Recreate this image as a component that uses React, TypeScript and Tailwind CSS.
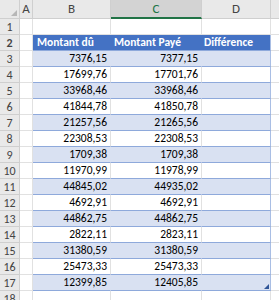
import React from "react";

const rows: [string, string][] = [
  ["7376,15", "7377,15"],
  ["17699,76", "17701,76"],
  ["33968,46", "33968,46"],
  ["41844,78", "41850,78"],
  ["21257,56", "21265,56"],
  ["22308,53", "22308,53"],
  ["1709,38", "1709,38"],
  ["11970,99", "11978,99"],
  ["44845,02", "44935,02"],
  ["4692,91", "4692,91"],
  ["44862,75", "44862,75"],
  ["2822,11", "2823,11"],
  ["31380,59", "31380,59"],
  ["25473,33", "25473,33"],
  ["12399,85", "12405,85"],
];

const font = { fontFamily: "Carlito, Calibri, Lato, 'Liberation Sans', sans-serif" };

function RowHead({ n }: { n: number }) {
  return (
    <div className="w-[20px] h-full shrink-0 bg-[#e9e9e9] border-r border-b border-[#cfcfcf] flex items-center justify-center text-[12px] leading-none text-[#444]">
      {n}
    </div>
  );
}

function App() {
  return (
    <div className="w-[279px] h-[300px] overflow-hidden bg-white select-none" style={font}>
      {/* column headers */}
      <div className="flex h-[19px]">
        <div className="relative w-[20px] shrink-0 bg-[#e9e9e9] border-r border-b border-[#cfcfcf]">
          <svg className="absolute right-[2px] bottom-[2px]" width="6" height="6" viewBox="0 0 6 6">
            <polygon points="6,0 6,6 0,6" fill="#b7b7b7" />
          </svg>
        </div>
        <div className="w-[13px] shrink-0 bg-[#e9e9e9] border-r border-b border-[#cfcfcf] flex items-center justify-center text-[13px] text-[#444]">
          A
        </div>
        <div className="w-[78px] shrink-0 bg-[#e9e9e9] border-r border-b border-[#cfcfcf] flex items-center justify-center text-[13px] text-[#444]">
          B
        </div>
        <div className="w-[91px] shrink-0 bg-[#d3d3d3] border-r border-[#cfcfcf] border-b-2 border-b-[#217346] flex items-center justify-center text-[13px] text-[#217346]">
          C
        </div>
        <div className="w-[69px] shrink-0 bg-[#e9e9e9] border-r border-b border-[#cfcfcf] flex items-center justify-center text-[13px] text-[#444]">
          D
        </div>
        <div className="flex-1 bg-[#e9e9e9] border-b border-[#cfcfcf]" />
      </div>

      {/* row 1 */}
      <div className="flex h-[16px]">
        <RowHead n={1} />
        <div className="w-[13px] shrink-0 border-r border-b border-[#e1e1e1]" />
        <div className="w-[78px] shrink-0 border-r border-b border-[#e1e1e1]" />
        <div className="w-[91px] shrink-0 border-r border-b border-[#e1e1e1]" />
        <div className="w-[69px] shrink-0 border-r border-b border-[#e1e1e1]" />
        <div className="flex-1 border-b border-[#e1e1e1]" />
      </div>

      {/* row 2: table header */}
      <div className="flex h-[16px] text-[11.5px] font-bold text-white">
        <RowHead n={2} />
        <div className="w-[13px] shrink-0 border-r border-b border-[#e1e1e1]" />
        <div className="w-[78px] shrink-0 bg-[#4472c4] border-b border-[#8ea9db] pl-[4px] flex items-center whitespace-nowrap">
          Montant dû
        </div>
        <div className="w-[91px] shrink-0 bg-[#4472c4] border-b border-[#8ea9db] pl-[3px] flex items-center whitespace-nowrap">
          Montant Payé
        </div>
        <div className="w-[69px] shrink-0 bg-[#4472c4] border-r border-r-[#a9bee4] border-b border-[#8ea9db] pl-[2px] flex items-center whitespace-nowrap">
          Différence
        </div>
        <div className="flex-1 border-b border-[#e1e1e1]" />
      </div>

      {rows.map(([due, paid], i) => {
        const band = i % 2 === 0;
        const n = i + 3;
        const last = i === rows.length - 1;
        return (
          <div key={n} className="flex h-[16px] text-[11.5px] text-black">
            <RowHead n={n} />
            <div className="w-[13px] shrink-0 border-r border-b border-[#e1e1e1]" />
            <div
              className={
                band
                  ? "w-[78px] shrink-0 bg-[#d9e1f2] border-r border-r-[#d9e1f2] border-b border-b-[#8ea9db] pr-[3px] flex items-center justify-end"
                  : "w-[78px] shrink-0 bg-white border-r border-r-[#e1e1e1] border-b border-b-[#8ea9db] pr-[3px] flex items-center justify-end"
              }
            >
              {due}
            </div>
            <div
              className={
                band
                  ? "w-[91px] shrink-0 bg-[#d9e1f2] border-r border-r-[#d9e1f2] border-b border-b-[#8ea9db] pr-[3px] flex items-center justify-end"
                  : "w-[91px] shrink-0 bg-white border-r border-r-[#e1e1e1] border-b border-b-[#8ea9db] pr-[3px] flex items-center justify-end"
              }
            >
              {paid}
            </div>
            <div
              className={
                band
                  ? "relative w-[69px] shrink-0 bg-[#d9e1f2] border-r border-r-[#a9bee4] border-b border-b-[#8ea9db]"
                  : "relative w-[69px] shrink-0 bg-white border-r border-r-[#a9bee4] border-b border-b-[#8ea9db]"
              }
            >
              {last && (
                <svg className="absolute right-[1px] bottom-[1px]" width="5" height="5" viewBox="0 0 5 5">
                  <polygon points="5,0 5,5 0,5" fill="#2f5597" />
                </svg>
              )}
            </div>
            <div className="flex-1 border-b border-[#e1e1e1]" />
          </div>
        );
      })}

      {/* row 18 (partly visible) */}
      <div className="flex h-[16px]">
        <RowHead n={18} />
        <div className="w-[13px] shrink-0 border-r border-b border-[#e1e1e1]" />
        <div className="w-[78px] shrink-0 border-r border-b border-[#e1e1e1]" />
        <div className="w-[91px] shrink-0 border-r border-b border-[#e1e1e1]" />
        <div className="w-[69px] shrink-0 border-r border-b border-[#e1e1e1]" />
        <div className="flex-1 border-b border-[#e1e1e1]" />
      </div>
    </div>
  );
}

export default App;
